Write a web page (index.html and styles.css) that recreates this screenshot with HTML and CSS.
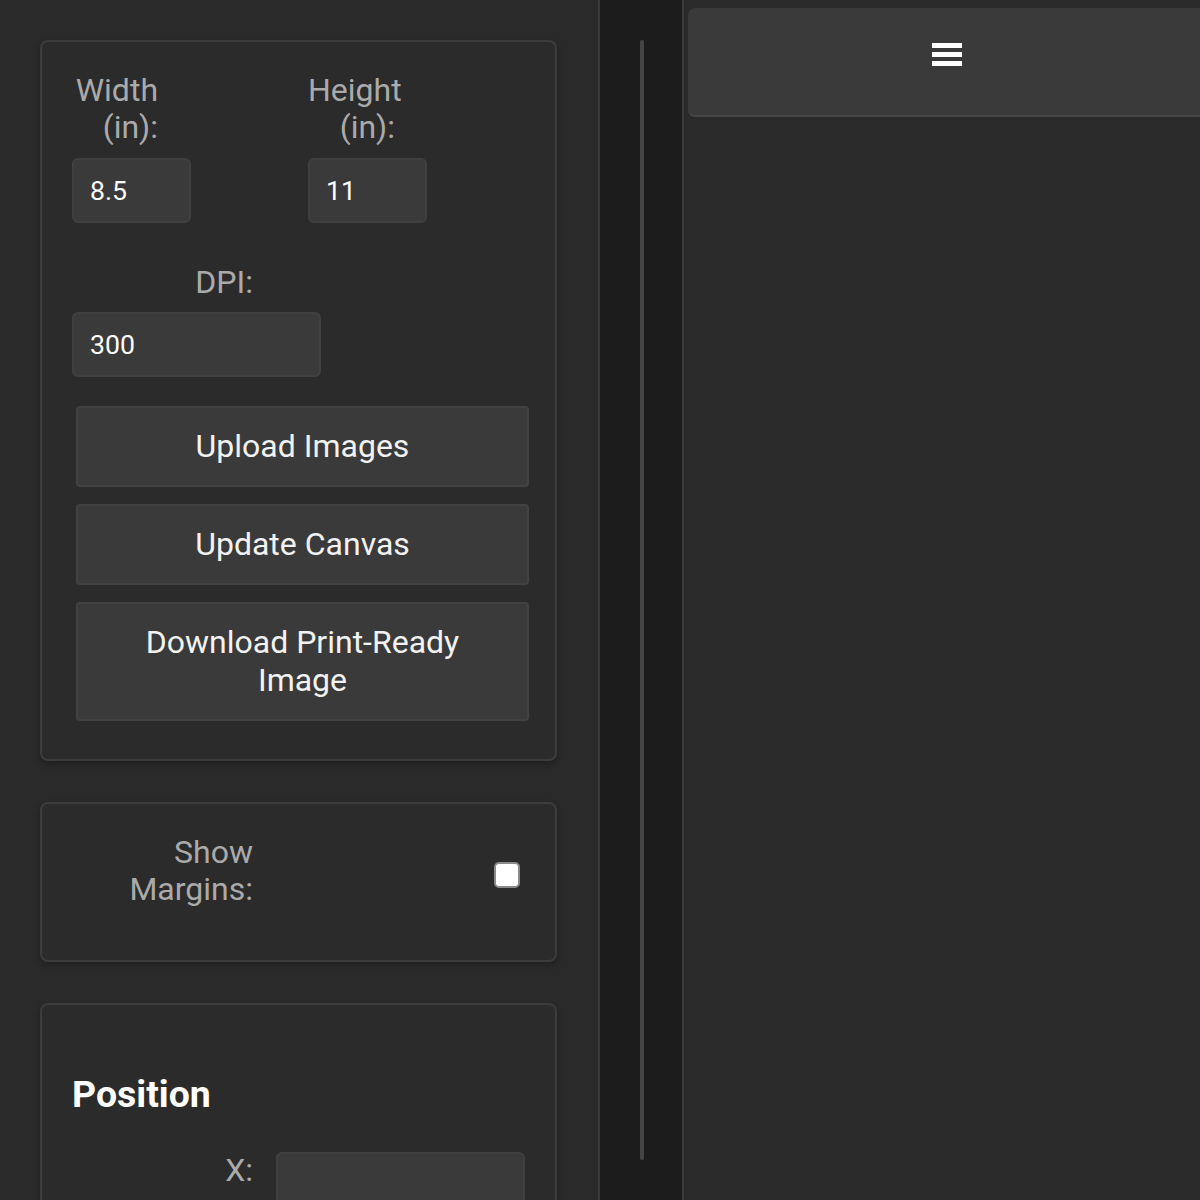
FILE: index.html
```html
<!DOCTYPE html>
<html lang="en">

<head>
    <meta charset="UTF-8">
    <meta name="viewport" content="width=device-width, initial-scale=1.0">
    <title>Print Layout</title>
    <link rel="stylesheet" href="styles.css">
</head>

<body>

    <div class="app">

        <!-- Panel de controles -->
        <aside class="sidebar">

            <div class="card">
                <div class="size-row">
                    <div class="field">
                        <label class="label label-width" for="width">Width<br>(in):</label>
                        <input class="input input-small" type="text" id="width" value="8.5">
                    </div>
                    <div class="field">
                        <label class="label label-height" for="height">Height<br><span class="nudge">(in):</span></label>
                        <input class="input input-small" type="text" id="height" value="11">
                    </div>
                </div>

                <div class="field field-dpi">
                    <label class="label label-dpi" for="dpi">DPI:</label>
                    <input class="input" type="text" id="dpi" value="300">
                </div>

                <button class="btn">Upload Images</button>
                <button class="btn">Update Canvas</button>
                <button class="btn">Download Print-Ready<br>Image</button>
            </div>

            <div class="card">
                <div class="check-row">
                    <label class="label label-row" for="margins">Show<br>Margins:</label>
                    <input class="checkbox" type="checkbox" id="margins">
                </div>
            </div>

            <div class="card">
                <h3 class="card-title">Position</h3>
                <div class="inline-row">
                    <label class="label label-row" for="pos-x">X:</label>
                    <input class="input" type="text" id="pos-x">
                </div>
                <div class="inline-row">
                    <label class="label label-row" for="pos-y">Y:</label>
                    <input class="input" type="text" id="pos-y">
                </div>
            </div>

        </aside>

        <!-- Separador -->
        <div class="gutter">
            <div class="gutter-handle"></div>
        </div>

        <!-- Area de trabajo -->
        <main class="main">
            <div class="toolbar">
                <svg class="menu-icon" width="30" height="24" viewBox="0 0 30 24">
                    <rect x="0" y="0" width="30" height="5" fill="#ffffff"/>
                    <rect x="0" y="9" width="30" height="5" fill="#ffffff"/>
                    <rect x="0" y="18" width="30" height="5" fill="#ffffff"/>
                </svg>
            </div>
        </main>

    </div>

</body>

</html>
```

FILE: styles.css
```css
/* Estilos generales */
body {
    font-family: 'Roboto', 'Liberation Sans', sans-serif;
    background-color: #2a2a2a;
    color: #ffffff;
    margin: 0;
    padding: 0;
    height: 1200px;
    overflow: hidden;
}

.app {
    display: flex;
    height: 1200px;
}

/* Panel lateral */
.sidebar {
    width: 517px;
    flex-shrink: 0;
    padding: 40px 41px 0 40px;
    background-color: #2a2a2a;
    border-right: 2px solid #3a3a3a;
    display: flex;
    flex-direction: column;
    gap: 41px;
}

.card {
    background-color: #2b2b2b;
    border: 2px solid #3c3c3c;
    border-radius: 8px;
    padding: 30px;
    box-shadow: 0 3px 6px rgba(0, 0, 0, 0.25);
}

.label {
    display: block;
    color: #aaaaaa;
    font-size: 32px;
    line-height: 37px;
    text-align: right;
}

.size-row {
    display: flex;
}

.field {
    display: flex;
    flex-direction: column;
    align-items: flex-start;
}

.size-row .field:first-child {
    width: 236px;
    flex-shrink: 0;
}

.label-width {
    width: 86px;
    margin-bottom: 12px;
}

.label-height {
    width: 93px;
    margin-bottom: 12px;
}

.nudge {
    padding-right: 6px;
}

.field-dpi {
    margin-top: 41px;
}

.label-dpi {
    width: 181px;
    margin-bottom: 11px;
}

.input {
    box-sizing: border-box;
    width: 249px;
    height: 65px;
    padding: 0 16px;
    background-color: #3a3a3a;
    border: 2px solid #404040;
    border-radius: 6px;
    color: #ffffff;
    font-family: inherit;
    font-size: 26.67px;
    outline: none;
}

.input-small {
    width: 119px;
}

/* Botones */
.btn {
    display: block;
    box-sizing: border-box;
    width: 100%;
    margin: 0 0 17px 4px;
    padding: 19px 10px 20px;
    background-color: #3a3a3a;
    border: 2px solid #424242;
    border-radius: 4px;
    color: #f2f2f2;
    font-family: inherit;
    font-size: 32px;
    line-height: 38px;
    cursor: pointer;
}

.field-dpi + .btn {
    margin-top: 29px;
}

.btn:last-child {
    margin-bottom: 8px;
}

/* Casilla de margenes */
.check-row {
    display: flex;
    align-items: center;
    justify-content: space-between;
    margin-bottom: 22px;
}

.label-row {
    width: 181px;
}

.checkbox {
    appearance: none;
    width: 26px;
    height: 26px;
    margin: 8px 5px 0 0;
    background-color: #ffffff;
    border: 2px solid #8a8a8a;
    border-radius: 5px;
}

/* Posicion */
.card-title {
    margin: 38px 0 0;
    font-size: 37.44px;
    line-height: 42px;
    font-weight: 700;
    color: #ffffff;
}

.inline-row {
    display: flex;
    align-items: flex-start;
    gap: 23px;
    margin-top: 37px;
}

/* Separador */
.gutter {
    width: 84px;
    flex-shrink: 0;
    background-color: #1c1c1c;
    border-right: 2px solid #3a3a3a;
    display: flex;
    justify-content: center;
    padding-top: 40px;
    box-sizing: border-box;
    height: 1200px;
}

.gutter-handle {
    width: 4px;
    height: 1120px;
    margin-left: 2px;
    background-color: #454545;
    border-radius: 2px;
}

/* Area principal */
.main {
    flex-grow: 1;
    background-color: #2a2a2a;
    padding: 8px 0 0 4px;
}

.toolbar {
    width: 518px;
    height: 109px;
    box-sizing: border-box;
    background-color: #3a3a3a;
    border-bottom: 2px solid #474747;
    border-radius: 7px;
    display: flex;
    justify-content: center;
    align-items: center;
}

.menu-icon {
    display: block;
    margin-top: -13px;
}
```
